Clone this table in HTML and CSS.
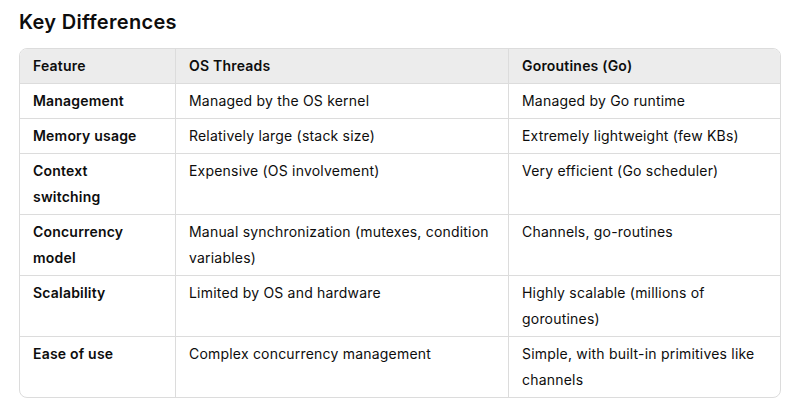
FILE: index.html
```html
<!DOCTYPE html>
<html>
<head>
<meta charset="utf-8">
<link rel="stylesheet" href="styles.css">
</head>
<body>
<h3 class="title">Key Differences</h3>
<div class="table-wrap">
<table class="cmp">
<thead>
<tr><th class="c1">Feature</th><th class="c2">OS Threads</th><th class="c3">Goroutines (Go)</th></tr>
</thead>
<tbody>
<tr><td><strong>Management</strong></td><td>Managed by the OS kernel</td><td>Managed by Go runtime</td></tr>
<tr><td><strong>Memory usage</strong></td><td>Relatively large (stack size)</td><td>Extremely lightweight (few KBs)</td></tr>
<tr><td><strong>Context switching</strong></td><td>Expensive (OS involvement)</td><td>Very efficient (Go scheduler)</td></tr>
<tr><td><strong>Concurrency model</strong></td><td>Manual synchronization (mutexes, condition variables)</td><td>Channels, go-routines</td></tr>
<tr><td><strong>Scalability</strong></td><td>Limited by OS and hardware</td><td>Highly scalable (millions of goroutines)</td></tr>
<tr><td><strong>Ease of use</strong></td><td>Complex concurrency management</td><td>Simple, with built-in primitives like channels</td></tr>
</tbody>
</table>
</div>
</body>
</html>
```
FILE: styles.css
```css
html, body {
  margin: 0;
  padding: 0;
  background: #ffffff;
}
body {
  font-family: Inter, "Noto Sans", sans-serif;
  color: #0d0d0d;
  padding: 9px 19px 0 19px;
}
.title {
  margin: 0 0 13px 0;
  font-size: 20px;
  font-weight: 600;
  line-height: 26px;
  letter-spacing: 0.3px;
}
.table-wrap {
  border: 1px solid #dcdcdc;
  border-radius: 8px;
  overflow: hidden;
  width: 760px;
}
.cmp {
  width: 100%;
  border-collapse: collapse;
  font-size: 14px;
  line-height: 26px;
  letter-spacing: 0.2px;
  table-layout: fixed;
}
.cmp th, .cmp td {
  text-align: left;
  vertical-align: top;
  padding: 4px 13px 4px 13px;
  border-left: 1px solid #dcdcdc;
  border-top: 1px solid #dcdcdc;
}
.cmp th:first-child, .cmp td:first-child {
  border-left: none;
  padding-right: 24px;
}
.cmp thead th {
  border-top: none;
  background: #ececec;
  font-weight: 600;
}
.cmp strong {
  font-weight: 600;
}
.c1 { width: 118px; }
.c2 { width: 306px; }
```
